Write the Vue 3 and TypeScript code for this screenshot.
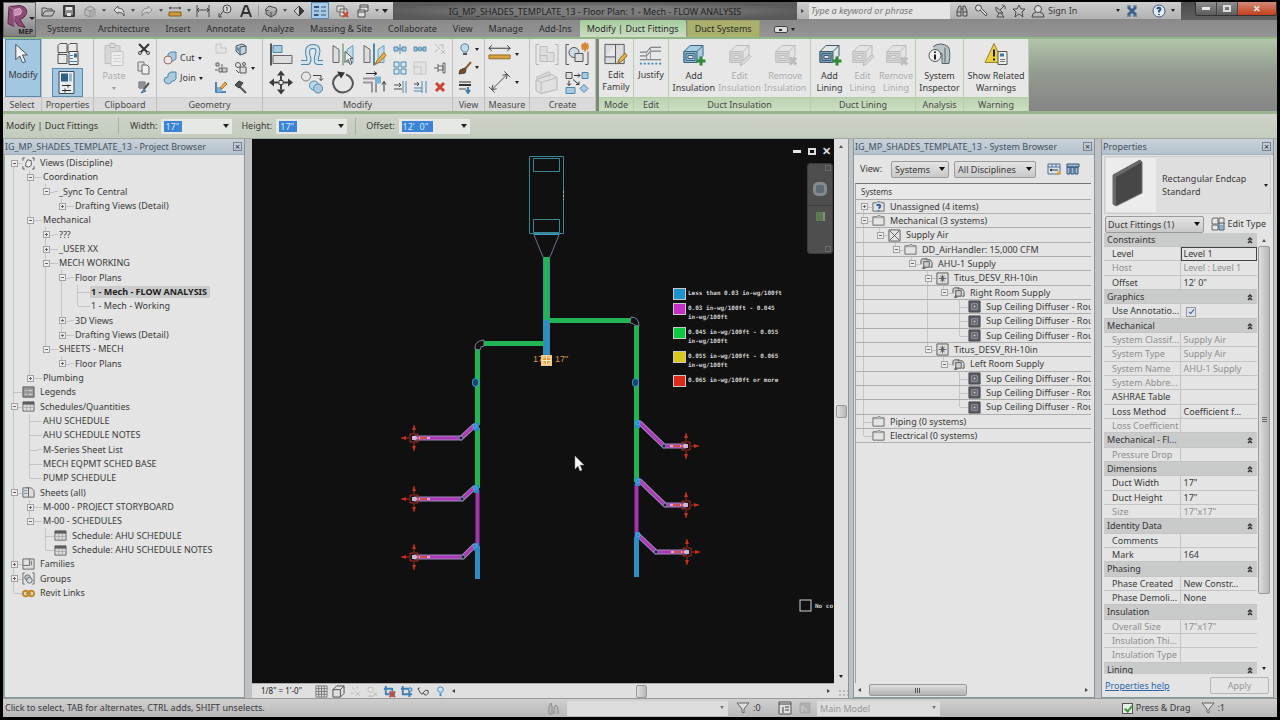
<script setup lang="ts">
import { h, ref } from 'vue'

interface TreeItem {
  depth: number
  label: string
  box?: '+' | '-'
  icon?: string
  active?: boolean
}
interface TreeRow extends TreeItem {
  guides: string[]
}
interface PropRow {
  label: string
  value?: string
  section?: boolean
  dim?: boolean
  check?: boolean
  focus?: boolean
}

const K = '#4a4a4a'
const B = '#4f86ad'
const L = '#a9cbe0'
const line = (d: string, c = K, w = 1, f = 'none') =>
  `<path d="${d}" fill="${f}" stroke="${c}" stroke-width="${w}" stroke-linejoin="round"/>`

const ductBox = (top: string, face: string, s: string, extra: string) =>
  line('M3 9L9 3H22V13L16 20H3Z', s, 1, top) + line('M3 9H16V20H3Z', s, 1, face) +
  line('M16 9L22 3', s) + line('M5 11H14V18H5Z', s, 1, face) + line('M7 13H12V16H7Z', s, 1, '#e0e0e0') + extra
const plus = line('M20 14V23M15.5 18.5H24.5', '#2f8a35', 3)
const ghostPen = line('M14 20L22 12L24 14L16 22L13 23Z', '#b9b9b9', 1, '#d8d8d8')
const ghostX = line('M17 15L23 22M23 15L17 22', '#bcbcbc', 3)

const icons: Record<string, string> = {
  logo: line('M5 3L16 2Q25 4 22 11Q20 15 16 16L21 24L14 22L10 16V23L4 20Z', '#5d2a4b', 1, '#8d4a74') +
    line('M10 6L16 5Q19 8 16 11L10 12Z', '#d9b7cb', 1, '#c58fb0') + line('M5 3L10 6V23', '#b0789a', 1),
  open: line('M1 12V4H5L6 5H11V7M1 12L4 7H14L11 12Z'),
  save: line('M2 2H12V12H2Z', '#3c3c3c', 2, '#8a8a8a') + '<path d="M4 3H10V6H4ZM5 9H9V12H5Z" fill="#e4e4e4"/>',
  sync: line('M2 5L7 2L12 5V11L7 13L2 11ZM2 5L7 7L12 5M7 7V13', '#8f8f8f', 1, '#bcbcbc') + '<circle cx="10" cy="10" r="3" fill="#aaa"/>',
  undo: line('M2 6L6 2V4Q13 4 12 12Q11 8 6 8V10Z', '#5f5f5f', 1, '#dedede'),
  redo: line('M12 6L8 2V4Q1 4 2 12Q3 8 8 8V10Z', '#909090', 1, '#cfcfcf'),
  ruler: '<path d="M1 8H13V12H1Z" fill="#d39a3c" stroke="#86601f"/>' + line('M1 4H13M3 3L1 4L3 5M11 3L13 4L11 5', '#555'),
  dim: line('M1 1V13M13 1V13M1 6H13M3 4L1 6L3 8M11 4L13 6L11 8'),
  tag: line('M1 13L6 6') + '<circle cx="9" cy="5" r="4" fill="#d6d6d6" stroke="#4a4a4a"/>' + line('M9 3V7M8 4L9 3') + line('M1 9V13H4'),
  textA: line('M2 13L6 2H8L12 13M4 9H10', '#333', 2),
  house: line('M1 6L5 2L12 4L13 7L8 8Z', K, 1, '#b4b4b4') + line('M2 7V10L7 13L12 10V7', K, 1, '#a0a0a0') + line('M7 8V13'),
  section: line('M7 2L12 7L7 12L2 7Z', K, 1, '#ccc') + '<path d="M7 2L12 7L7 12Z" fill="#333"/>',
  thin: line('M1 3H6M8 3H13M1 7H6M8 7H13M1 11H6M8 11H13', '#33577a', 1) + '<path d="M1 2H6V4H1ZM1 10H5V12H1Z" fill="#33577a"/>',
  closeHidden: line('M2 2H9V8H2ZM5 5H12V12H5Z', '#666', 1, '#ddd') + line('M8 8L13 13M13 8L8 13', '#cf4a33', 2),
  windows: line('M4 1H12V7H4Z', K, 1, '#ddd') + line('M2 6H9V13H2Z', K, 1, '#ddd') + line('M2 8H9M4 3H12', K),
  binoc: line('M2 12V7L4 2H6V12ZM8 12V2H10L12 7V12Z', K, 1, '#bbb') + line('M6 5H8M2 8H6M8 8H12', K),
  key: '<circle cx="4.500" cy="4" r="3" fill="#ddd" stroke="#4a4a4a"/>' + line('M6 6L12 12L13 10L8 5', K, 1, '#ddd'),
  dish: line('M3 3Q2 10 10 9L3 3ZM6 9L4 13H11L8 9M7 6L11 2M9 1Q13 1 12 5'),
  star: line('M7 1L9 5H13L10 8L11 13L7 10L3 13L4 8L1 5H5Z'),
  user: '<circle cx="7" cy="5" r="3.500" fill="#ddd" stroke="#4a4a4a"/>' + line('M1 13Q1 9 5 8M13 13Q13 9 9 8M1 13H13'),
  exchange: line('M3 3L11 11M11 3L3 11', '#3f5f8c', 3) + line('M2 2H6M8 2H12M2 12H6M8 12H12', '#3f5f8c', 1),
  help: '<circle cx="7" cy="7" r="6" fill="#e6ecf4" stroke="#44597e"/>' + line('M5 5Q6 3 8 4Q9 6 7 7V8.500M7 10V11', '#2d4f8e', 2),
  cursor: line('M5 2V18L9 14L12 21L15 20L12 13H17Z', '#3d4a55', 1, '#f5f5f5'),
  famTypes: line('M3 4L5 2H12V11H3ZM13 4L15 2H22V11H13ZM3 13H12V22H3ZM3 13L5 11', '#555', 1, '#e9e9e9') +
    line('M14 10H23V23H14Z', '#444', 1, '#f2f2f2') + line('M15 14H18M15 17H18M15 20H22', '#3c7fb0') + '<path d="M19 12H22V16H19Z" fill="#356f9c"/>',
  props: line('M4 1H19V23H4Z', '#3f4b55', 1, '#e9eef2') + '<path d="M6 3H13V11H6Z" fill="#2f5f86"/><path d="M14 3H17V11H14Z" fill="#93b7d2"/>' + line('M7 15H16M13 14V17M7 20H16M10 18V22', '#333'),
  paste: line('M3 3H18V21H3Z', '#c0c0c0', 1, '#d6d6d6') + line('M8 1H13V5H8Z', '#b8b8b8', 1, '#ddd') + line('M9 9H21V23H9Z', '#c4c4c4', 1, '#ececec') + line('M11 13H19M11 16H19M11 19H19', '#d0d0d0'),
  scissors: line('M2 2L10 10M12 2L4 10', '#333', 2) + '<circle cx="3" cy="11" r="1.500" fill="none" stroke="#444"/><circle cx="11" cy="11" r="1.500" fill="none" stroke="#444"/>',
  copyPage: line('M1 1H7V10H1Z', '#777', 1, '#ddd') + line('M5 4H10L12 6V13H5Z', '#666', 1, '#eee'),
  matchType: line('M2 2H8V8H2Z', '#556', 1, '#ccc') + line('M3 4H7M3 6H7', '#555') + line('M12 3L7 9', '#555', 2) + line('M7 9L4 13L9 11Z', '#3f6f94', 1, '#6ea2c5'),
  cut: line('M5 3L8 1H13V8L10 10H5Z', B, 1, L) + '<circle cx="5" cy="9" r="4" fill="#e8e8e8" stroke="#a06a6a"/>',
  join: line('M5 3L8 1H13V8L11 10H9Q8 13 5 13Q1 12 1 9Q1 6 5 6Z', B, 1, L),
  cope: line('M2 2H7V6H12V11H2Z', '#c4c4c4', 1, '#e4e4e4'),
  paint: line('M2 4L8 2L12 4V11L6 13L2 9Z', '#456', 1, '#c2d4e0') + line('M6 5L12 4M6 5V13', '#456') + '<path d="M3 5L5 6V10L3 8Z" fill="#5b8cb0"/>',
  wallJoin: line('M2 2H5V5H2ZM5 7H13V11H5ZM1 9H4M8 3V6', '#666', 1, '#ccc') + line('M8 7V11', '#555'),
  splitFace: line('M6 6H12V12H6Z', '#555', 1, '#ddd') + '<circle cx="4" cy="4" r="2.500" fill="none" stroke="#555"/><circle cx="10" cy="3" r="1.500" fill="none" stroke="#555"/>' + line('M2 9L5 12'),
  demo: line('M2 2V12H12', B, 2, 'none') + '<path d="M3 7H8V12H3Z" fill="#7fb0d0"/>' + line('M6 8L11 2L13 4L8 9Z', '#a87a2a', 1, '#e2b04c'),
  hammer: line('M5 6L12 13', '#555', 2) + line('M1 5L5 1L9 3L5 8Z', '#333', 1, '#555'),
  align: line('M2 1V23', '#555', 2) + line('M4 3H13V10H4Z', B, 1, L) + line('M4 13H23V21H4Z', '#666', 1, '#ddd'),
  offset: line('M1 20H8Q10 17 8 13Q6 4 13 4Q20 4 17 13Q15 20 18 20H23', '#4f86ad', 5) + line('M1 20H8Q10 17 8 13Q6 4 13 4Q20 4 17 13Q15 20 18 20H23', '#d3e3ec', 3),
  mirrorPick: line('M2 3L8 7V20H2Z', '#666', 1, '#ddd') + line('M12 1V23', '#3f8f55', 1) + line('M22 3L16 7V20H22Z', '#6b9fbe', 1, '#c5dcea') + line('M14 9V20L17 17L19 22L21 21L19 16H22Z', '#555', 1, '#eee'),
  mirrorDraw: line('M2 3L8 7V20H2Z', '#666', 1, '#ddd') + line('M12 1V23', B, 2) + line('M22 3L16 7V20H22Z', '#6b9fbe', 1, '#c5dcea') + line('M13 22L15 18L22 10L24 13L17 20Z', '#9a6d20', 1, '#e5b24a'),
  move: line('M12 5V19M5 12H19', '#444', 2) + '<path d="M12 0L16 5H8ZM12 24L8 19H16ZM0 12L5 8V16ZM24 12L19 16V8Z" fill="#3a3a3a"/><path d="M10 10H14V14H10Z" fill="#e8e8e8" stroke="#444"/>',
  copyBig: '<circle cx="6" cy="6" r="4.500" fill="#e6e6e6" stroke="#777"/><circle cx="14" cy="15" r="4.500" fill="#bcd8e8" stroke="#4f86ad"/><circle cx="18" cy="18" r="4.500" fill="#a9cbe0" stroke="#4f86ad"/>' + line('M13 5H21V10M19 8L21 10L23 8', '#444', 1),
  rotate: line('M8 4Q2 7 2 13Q4 22 12 22Q21 21 22 13Q21 6 15 4', '#555', 2) + '<path d="M6 1L14 2L10 8Z" fill="#333"/>',
  trim: line('M1 8H14V22M1 12H10V22', '#999', 2) + '<path d="M13 6H19V13H13Z" fill="#7fb3d3"/>' + line('M4 3H15M12 1L15 3L12 5M22 21V11M20 14L22 11L24 14', '#333'),
  split: line('M1 5H5V9H1ZM9 5H13V9H9ZM7 2V12M5 7H9', B, 1, L),
  splitGap: line('M1 5H4V9H1ZM10 5H13V9H10ZM4 7H10', B, 1, L) + '<circle cx="7" cy="7" r="2" fill="none" stroke="#4f86ad"/>',
  unpin: line('M2 2L7 7M6 3H10V7M2 10L5 7M8 8L12 12M12 8L8 12', '#bbb', 1),
  array: line('M1 1H6V6H1ZM8 1H13V6H8ZM1 8H6V13H1ZM8 8H13V13H8Z', B, 1, '#dbe7ee'),
  scale: line('M1 1H13V13H1ZM1 6H8V13', '#c6c6c6', 1, '#e2e2e2'),
  pin: line('M1 7H5M5 3V11M5 5H10V9H5M10 2V12H12V2Z', '#666', 1),
  trimOne: line('M1 5H8M6 3L8 5L6 7M1 9H9', K, 1) + line('M10 1V13M13 1V13', '#5d89a8', 1),
  trimMany: line('M1 4H6M4 2L6 4L4 6', K, 1) + line('M9 1V13M13 1V13M1 8H9M1 11H9', B, 1),
  del: line('M3 3L11 11M11 3L3 11', '#cc4234', 3),
  bulb: line('M5 10Q2 7 3 4Q6 0 10 3Q12 6 9 10Z', '#5686a8', 1, '#bcdcec') + line('M5 12H9', '#555', 2),
  brush: line('M13 1L7 8', '#8e5d3a', 2) + line('M7 7L2 9L1 13L7 12L8 9Z', '#553a2a', 1, '#7a4b31'),
  linework: line('M1 2H13', '#333', 1) + line('M1 5H13', '#333', 2) + line('M1 9H8', K, 1) + line('M10 7V12M8 10L10 13L12 10', '#3f7fae', 2),
  measure: line('M1 6H23M4 3L1 6L4 9M20 3L23 6L20 9', '#333') + '<path d="M1 13H23V17H1Z" fill="#d9a23e" stroke="#8f6a26"/>',
  dimension: line('M4 20L20 4M1 17L7 23M17 1L23 7M4 20L5 15M4 20L9 19M20 4L15 5M20 4L19 9', '#444'),
  assembly: line('M4 2H1V22H4M20 2H23V22H20', '#b5b5b5') + line('M5 4H12V10H19V19H5Z M5 13H12V19', '#bdbdbd', 1, '#dedede'),
  group: line('M4 2H1V22H4M20 22H23V9', '#555') + '<circle cx="9" cy="10" r="5" fill="#ccdce6" stroke="#555"/>' + line('M10 11H18V19H10Z', '#555', 1, '#ddd') + line('M20 0V9M16 4H24M17 1L23 7M23 1L17 7', '#d88631', 2),
  parts: line('M1 7L14 1L16 4V9', '#bcbcbc', 1, '#d8d8d8') + line('M1 9L17 4L22 7V19L6 23L1 20Z', '#b5b5b5', 1, '#e0e0e0') + line('M1 9L6 12L22 7M6 12V23', '#bcbcbc', 1),
  similar: line('M1 2H7V8H1Z', '#555', 1, '#ddd') + line('M17 2H23V8H17Z', B, 1, L) + line('M1 17H10V23H1Z', B, 1, L) + line('M19 14L23 18L19 22L15 18Z', B, 1, L) + line('M9 5H15M13 3L15 5L13 7M4 10V15M2 13L4 15L6 13M8 9L14 14M14 11V14H11', '#333'),
  editFamily: line('M1 2H21V22H1Z M1 15H12V2 M12 15V22', '#555', 1, '#d9dcdf') + line('M14 22L16 17L22 11L24 14L18 20Z', '#8a6420', 1, '#e3b250'),
  justify: line('M1 10H8L12 5H23M1 14H8L12 9H23M1 18H23', '#5c656c', 1) + line('M12 5V18M8 10V18', '#999') + line('M1 22H3M5 22H7M9 22H11M13 22H15M17 22H19M21 22H23', '#3f85bb', 2),
  addIns: ductBox('#a6cde2', '#8fbad3', '#3f6480', plus),
  editIns: ductBox('#e3e3e3', '#d9d9d9', '#bdbdbd', ghostPen),
  remIns: ductBox('#e3e3e3', '#d9d9d9', '#bdbdbd', ghostX),
  addLin: ductBox('#e4e7e9', '#6fa6c8', '#4a5a66', plus),
  inspector: line('M6 4Q14 -1 21 4Q24 8 22 21H15V11H8', '#556068', 1, '#bac3c8') + line('M18 5V20', '#556068') + '<circle cx="8" cy="13" r="6" fill="#f1f1f1" stroke="#555"/>' + line('M8 12V17M8 9V10.500', '#222', 2),
  warning: line('M10 1L19 20H1Z', '#9c8526', 1, '#ecd03f') + line('M10 7V14M10 16V18', '#222', 2) + line('M14 9H23V22H14Z', '#555', 1, '#eee') + '<path d="M16 11H20V14H16Z" fill="#3f77a5"/>' + line('M16 17H21M16 19H21', '#777'),
  views: line('M1 4V1H3M11 1H13V4M1 10V13H3M11 13H13V10', '#555') + line('M4 7L6 3L10 4V9L7 11L4 10Z', '#555', 1, '#eee'),
  legend: line('M1 1H13V12H1Z', '#555', 1, '#999') + line('M3 5H5M7 5H11M3 9H5M7 9H11', '#ddd', 1),
  sched: line('M1 2H13V12H1Z', '#666', 1, '#dcdcdc') + '<path d="M1 2H13V5H1Z" fill="#5c5c5c"/>' + line('M1 8H13M5 5V12M9 5V12', '#aaa'),
  sheets: line('M1 2H7V12H1ZM5 2H10L13 5V12H7', '#666', 1, '#ddd') + line('M2 5H6M2 8H6', '#6b8fa8', 1),
  families: line('M1 1H13V12H1ZM1 8H8V1', '#666', 1, '#ddd') + line('M10 3V8', '#666'),
  groups: line('M3 1H1V13H3M11 1H13V13H11', '#666') + '<circle cx="6" cy="6" r="3" fill="#b5c4cc" stroke="#666"/><circle cx="8" cy="9" r="3" fill="#d3dadd" stroke="#666"/>',
  links: line('M1 7Q1 4 4 4Q7 4 7 7Q7 10 4 10Q1 10 1 7M7 7Q7 4 10 4Q13 4 13 7Q13 10 10 10Q7 10 7 7M4 7H10', '#c18a28', 2),
  folder: line('M1 12V3H5L6 2H9L10 3H13V12Z', '#666', 1, '#e4e4e4') + line('M1 4H13', '#999'),
  folderQ: line('M1 12V3H5L6 2H9L10 3H13V12Z', '#666', 1, '#e4e4e4') + line('M5 6Q7 4 9 6Q9 8 7 9M7 11V12', '#27609a', 2),
  boxX: line('M1 1H13V13H1ZM2 2L12 12M12 2L2 12', '#555'),
  sys: line('M4 5H10V11H4ZM1 8V4Q1 2 3 2H8M13 6V11H11M2 12H6M4 10V13M13 6L11 3H6', '#555', 1, '#ccc'),
  fan: line('M1 1H13V13H1Z', '#555', 1, '#ddd') + line('M7 3V11M3 7H11M5 4L9 10M9 4L5 10', '#555', 1),
  diff: '<path d="M1 1H13V13H1Z" fill="#5b5c66" stroke="#45454e"/><path d="M4 4H10V10H4Z" fill="none" stroke="#9d9da8"/><path d="M6 6H8V8H6Z" fill="#ccc"/>',
  auto: line('M1 2H13V12H1ZM1 5H13M5 2V5M9 2V5', '#4b6f8e', 1, '#dde6ec') + line('M3 8H11M5 7L3 8L5 9', '#333') + '<circle cx="12" cy="11" r="2" fill="#e0a540"/>',
  columns: line('M1 2H13V5H1ZM1 5H4V12H1ZM5 5H8V12H5ZM9 5H12V12H9Z', '#33577a', 1, '#9dbdd3'),
  editType: line('M1 2L2 1H7V7H1ZM8 1H13V7H8ZM1 8H7V13H1Z', '#666', 1, '#e6e6e6') + line('M8 6H13V13H8Z', '#456', 1, '#c6d9e6') + line('M9 9H12M9 11H12', B),
  grid: line('M1 1H13V13H1ZM1 4H13M1 7H13M1 10H13M4 1V13M7 1V13M10 1V13', '#777'),
  cube: line('M1 5H9V13H1ZM1 5L5 1H13V9L9 13M9 5L13 1'),
  ghostA: line('M3 2L6 5M9 1V4M2 9H5M7 7L12 12M12 7L7 12', '#b5b5b5'),
  ghostB: '<circle cx="5" cy="5" r="3" fill="none" stroke="#bbb"/>' + line('M2 12H8M8 8L12 12M12 8L8 12', '#b5b5b5'),
  cropX: line('M3 1V10H13M1 4H10V13', '#3f7fb5', 2) + line('M7 7L13 13M13 7L7 13', '#cb4a33', 2),
  crop: line('M3 1V10H13M1 4H10V13', '#3f7fb5', 2) + '<circle cx="11" cy="5" r="2" fill="#9cc8e8" stroke="#3f7fb5"/>',
  glasses: line('M1 4L4 9Q6 11 7 8Q9 4 12 6Q13 9 10 11Q7 11 7 8M1 4L3 3', '#444', 1),
  bulbS: '<circle cx="7" cy="5" r="3" fill="#cfe6f6" stroke="#3f85c0"/>' + line('M7 9V12', '#3f85c0', 2),
  worker: line('M3 13V5L5 2L6 6V13ZM8 13V6L10 4L12 7V13', '#8a8a8a', 1, '#bbb'),
  funnel: line('M1 2H13L8 8V12L6 11V8Z', '#666', 1, '#ddd'),
  options: line('M1 1H13V13H1Z', '#555', 1, '#ddd') + line('M1 3H13M5 6V12M7 6H11M7 9H11', '#444'),
  optGhost: line('M2 2H12V12H2Z', '#a6a6a6', 1, '#b0b0b0') + line('M4 11V5L9 10', '#d0d0d0', 1)
}

const Ic = (p: { n: string; s?: number }) =>
  h('svg', {
    viewBox: (p.s ?? 14) >= 20 ? '0 0 25 24' : '0 0 14 14',
    width: p.s ?? 14,
    height: p.s ?? 14,
    'aria-hidden': 'true',
    class: 'ic',
    innerHTML: icons[p.n]
  })
Ic.props = ['n', 's']

const quick: [string, boolean][] = [
  ['open', false], ['save', false], ['sync', true], ['undo', true], ['redo', true], ['ruler', true], ['dim', false],
  ['tag', false], ['textA', false], ['|', false], ['house', true], ['section', false], ['thin', false], ['closeHidden', false], ['windows', true]
]
const tabs = ['Systems', 'Architecture', 'Insert', 'Annotate', 'Analyze', 'Massing & Site', 'Collaborate', 'View', 'Manage', 'Add-Ins']
const modifyBig = ['align', 'offset', 'mirrorPick', 'mirrorDraw', 'move', 'copyBig', 'rotate', 'trim']
const modifySmall = ['split', 'splitGap', 'unpin', 'array', 'scale', 'pin', 'trimOne', 'trimMany', 'del']
const options = [
  { id: 'width', label: 'Width:', value: '17"', sep: true },
  { id: 'height', label: 'Height:', value: '17"', sep: false },
  { id: 'offset', label: 'Offset:', value: "12'  0\"", sep: true }
]
const optionValues = ref(options.map(o => o.value))

function withGuides(items: TreeItem[]): TreeRow[] {
  return items.map((it, i) => {
    const guides: string[] = []
    for (let l = 0; l <= it.depth; l++) {
      let more = false
      for (let j = i + 1; j < items.length && items[j].depth >= l; j++) {
        if (items[j].depth === l) { more = true; break }
      }
      if (l < it.depth) guides.push(more ? 'full' : '')
      else guides.push((more ? 'full' : 'half') + ' tee' + (i === 0 ? ' first' : ''))
    }
    return { ...it, guides }
  })
}

const project = withGuides([
  { depth: 0, label: 'Views (Discipline)', box: '-', icon: 'views' },
  { depth: 1, label: 'Coordination', box: '-' },
  { depth: 2, label: '_Sync To Central', box: '-' },
  { depth: 3, label: 'Drafting Views (Detail)', box: '+' },
  { depth: 1, label: 'Mechanical', box: '-' },
  { depth: 2, label: '???', box: '+' },
  { depth: 2, label: '_USER XX', box: '+' },
  { depth: 2, label: 'MECH WORKING', box: '-' },
  { depth: 3, label: 'Floor Plans', box: '-' },
  { depth: 4, label: '1 - Mech - FLOW ANALYSIS', active: true },
  { depth: 4, label: '1 - Mech - Working' },
  { depth: 3, label: '3D Views', box: '+' },
  { depth: 3, label: 'Drafting Views (Detail)', box: '+' },
  { depth: 2, label: 'SHEETS - MECH', box: '-' },
  { depth: 3, label: 'Floor Plans', box: '+' },
  { depth: 1, label: 'Plumbing', box: '+' },
  { depth: 0, label: 'Legends', icon: 'legend' },
  { depth: 0, label: 'Schedules/Quantities', box: '-', icon: 'sched' },
  { depth: 1, label: 'AHU SCHEDULE' },
  { depth: 1, label: 'AHU SCHEDULE NOTES' },
  { depth: 1, label: 'M-Series Sheet List' },
  { depth: 1, label: 'MECH EQPMT SCHED BASE' },
  { depth: 1, label: 'PUMP SCHEDULE' },
  { depth: 0, label: 'Sheets (all)', box: '-', icon: 'sheets' },
  { depth: 1, label: 'M-000 - PROJECT STORYBOARD', box: '+' },
  { depth: 1, label: 'M-00 - SCHEDULES', box: '-' },
  { depth: 2, label: 'Schedule: AHU SCHEDULE', icon: 'sched' },
  { depth: 2, label: 'Schedule: AHU SCHEDULE NOTES', icon: 'sched' },
  { depth: 0, label: 'Families', box: '+', icon: 'families' },
  { depth: 0, label: 'Groups', box: '+', icon: 'groups' },
  { depth: 0, label: 'Revit Links', icon: 'links' }
])

const diffuser: TreeItem = { depth: 6, label: 'Sup Ceiling Diffuser - Rou', icon: 'diff' }
const system = withGuides([
  { depth: 0, label: 'Unassigned (4 items)', box: '+', icon: 'folderQ' },
  { depth: 0, label: 'Mechanical (3 systems)', box: '-', icon: 'folder' },
  { depth: 1, label: 'Supply Air', box: '-', icon: 'boxX' },
  { depth: 2, label: 'DD_AirHandler: 15,000 CFM', box: '-', icon: 'folder' },
  { depth: 3, label: 'AHU-1 Supply', box: '-', icon: 'sys' },
  { depth: 4, label: 'Titus_DESV_RH-10in', box: '-', icon: 'fan' },
  { depth: 5, label: 'Right Room Supply', box: '-', icon: 'sys' },
  diffuser, diffuser, diffuser,
  { depth: 4, label: 'Titus_DESV_RH-10in', box: '-', icon: 'fan' },
  { depth: 5, label: 'Left Room Supply', box: '-', icon: 'sys' },
  diffuser, diffuser, diffuser,
  { depth: 0, label: 'Piping (0 systems)', icon: 'folder' },
  { depth: 0, label: 'Electrical (0 systems)', icon: 'folder' }
])

const props: PropRow[] = [
  { label: 'Constraints', section: true },
  { label: 'Level', value: 'Level 1', focus: true },
  { label: 'Host', value: 'Level : Level 1', dim: true },
  { label: 'Offset', value: "12'  0\"" },
  { label: 'Graphics', section: true },
  { label: 'Use Annotatio...', check: true },
  { label: 'Mechanical', section: true },
  { label: 'System Classif...', value: 'Supply Air', dim: true },
  { label: 'System Type', value: 'Supply Air', dim: true },
  { label: 'System Name', value: 'AHU-1 Supply', dim: true },
  { label: 'System Abbre...', dim: true },
  { label: 'ASHRAE Table' },
  { label: 'Loss Method', value: 'Coefficient f...' },
  { label: 'Loss Coefficient', dim: true },
  { label: 'Mechanical - Fl...', section: true },
  { label: 'Pressure Drop', dim: true },
  { label: 'Dimensions', section: true },
  { label: 'Duct Width', value: '17"' },
  { label: 'Duct Height', value: '17"' },
  { label: 'Size', value: '17"x17"', dim: true },
  { label: 'Identity Data', section: true },
  { label: 'Comments' },
  { label: 'Mark', value: '164' },
  { label: 'Phasing', section: true },
  { label: 'Phase Created', value: 'New Constr...' },
  { label: 'Phase Demoli...', value: 'None' },
  { label: 'Insulation', section: true },
  { label: 'Overall Size', value: '17"x17"', dim: true },
  { label: 'Insulation Thi...', dim: true },
  { label: 'Insulation Type', dim: true },
  { label: 'Lining', section: true }
]

const legend = [
  { y: 288, c: '#1c93cf', t: ['Less than 0.03 in-wg/100ft'] },
  { y: 303, c: '#c42fc4', t: ['0.03 in-wg/100ft - 0.045', 'in-wg/100ft'] },
  { y: 327, c: '#10c840', t: ['0.045 in-wg/100ft - 0.055', 'in-wg/100ft'] },
  { y: 351, c: '#d8c81c', t: ['0.055 in-wg/100ft - 0.065', 'in-wg/100ft'] },
  { y: 375, c: '#dc2a18', t: ['0.065 in-wg/100ft or more'] }
]
const branches = [
  { d: 'M475 425L461 438H414', x: 414, y: 438, s: 1, tx: 476, ty: 426, ex: 461 },
  { d: 'M475 487L462 499H414', x: 414, y: 499, s: 1, tx: 476, ty: 488, ex: 462 },
  { d: 'M475 545L463 557H414', x: 414, y: 557, s: 1, tx: 476, ty: 546, ex: 463 },
  { d: 'M639 422L664 446H686', x: 686, y: 446, s: -1, tx: 637, ty: 423, ex: 664 },
  { d: 'M639 480L665 505H686', x: 686, y: 505, s: -1, tx: 637, ty: 481, ex: 665 },
  { d: 'M638 535L656 552H687', x: 687, y: 552, s: -1, tx: 637, ty: 535, ex: 656 }
]
const viewIcons = ['grid', 'cube', 'ghostA', 'ghostB', 'cropX', 'crop', 'glasses', 'bulbS']
const pressDrag = ref(true)
</script>

<template>
  <div class="window">
    <header class="top">
      <button class="app" aria-label="Application menu"><Ic n="logo" :s="25" /><i class="dn"></i><span>MEP</span></button>
      <div class="title">
        <div class="quick">
          <template v-for="[n, arrow] in quick" :key="n">
            <i v-if="n === '|'" class="qsep"></i>
            <button v-else :class="{ on: n === 'thin' }" :aria-label="n"><Ic :n="n" /></button>
            <i v-if="arrow" class="dn small"></i>
          </template>
          <i class="dn last"></i>
        </div>
        <h1>IG_MP_SHADES_TEMPLATE_13 - Floor Plan: 1 - Mech - FLOW ANALYSIS</h1>
        <div class="info">
          <i class="rt"></i>
          <input type="text" placeholder="Type a keyword or phrase" aria-label="Search" />
          <button v-for="n in ['binoc', 'key', 'dish', 'star']" :key="n" :aria-label="n"><Ic :n="n" /></button>
          <button class="sign"><Ic n="user" /> Sign In</button>
          <i class="dn small"></i>
          <button aria-label="Exchange apps"><Ic n="exchange" /></button>
          <button aria-label="Help" class="help"><Ic n="help" /></button>
          <i class="dn small"></i>
        </div>
        <div class="wins">
          <button aria-label="Minimize"><i class="min"></i></button>
          <button aria-label="Restore"><i class="max"></i></button>
          <button aria-label="Close" class="x">✕</button>
        </div>
      </div>
      <nav class="tabs">
        <a v-for="t in tabs" :key="t" href="#">{{ t }}</a>
        <a href="#" class="active">Modify | Duct Fittings</a>
        <a href="#" class="ctx">Duct Systems</a>
        <button class="toggle" aria-label="Minimize ribbon"><i></i></button><i class="dn small"></i>
      </nav>
    </header>

    <div class="ribbon">
      <section class="w-select"><div class="body tight"><button class="tall sel"><Ic n="cursor" :s="24" /><span>Modify</span></button></div><h2>Select</h2></section>
      <section class="w-props"><div class="body col"><button aria-label="Type properties"><Ic n="famTypes" :s="25" /></button><button class="sel wide" aria-label="Properties"><Ic n="props" :s="25" /></button></div><h2>Properties</h2></section>
      <section class="w-clip">
        <div class="body"><button class="tall off"><Ic n="paste" :s="25" /><span>Paste</span><i class="dn small"></i></button>
          <div class="g3 one"><button v-for="n in ['scissors', 'copyPage', 'matchType']" :key="n" :aria-label="n"><Ic :n="n" /></button></div></div>
        <h2>Clipboard</h2>
      </section>
      <section class="w-geo">
        <div class="body">
          <div class="rows"><button><Ic n="cut" /> Cut <i class="dn small"></i></button><button><Ic n="join" /> Join <i class="dn small"></i></button></div>
          <div class="g3 two"><button v-for="n in ['cope', 'paint', 'wallJoin', 'splitFace', 'demo', 'hammer']" :key="n" :aria-label="n"><Ic :n="n" /></button></div>
          <i class="dn small"></i>
        </div>
        <h2>Geometry</h2>
      </section>
      <section class="w-mod">
        <div class="body">
          <div class="g2 four"><button v-for="n in modifyBig" :key="n" :aria-label="n"><Ic :n="n" :s="25" /></button></div>
          <div class="g3 three"><button v-for="n in modifySmall" :key="n" :aria-label="n"><Ic :n="n" /></button></div>
        </div>
        <h2>Modify</h2>
      </section>
      <section class="w-view"><div class="body"><div class="g3 one"><button v-for="n in ['bulb', 'brush', 'linework']" :key="n" :aria-label="n"><Ic :n="n" /><i v-if="n !== 'linework'" class="dn small"></i></button></div></div><h2>View</h2></section>
      <section class="w-meas"><div class="body"><div class="g2 single"><button v-for="n in ['measure', 'dimension']" :key="n" :aria-label="n"><Ic :n="n" :s="24" /><i class="dn small"></i></button></div></div><h2>Measure</h2></section>
      <section class="w-create"><div class="body"><div class="g2 pair"><button v-for="n in ['assembly', 'group', 'parts', 'similar']" :key="n" :aria-label="n"><Ic :n="n" :s="25" /></button></div></div><h2>Create</h2></section>
      <section class="w-mode green edge"><div class="body"><button class="tall"><Ic n="editFamily" :s="24" /><span>Edit<br />Family</span></button></div><h2>Mode</h2></section>
      <section class="w-edit green"><div class="body"><button class="tall"><Ic n="justify" :s="24" /><span>Justify</span></button></div><h2>Edit</h2></section>
      <section class="w-ins green">
        <div class="body">
          <button class="tall"><Ic n="addIns" :s="25" /><span>Add<br />Insulation</span></button>
          <button class="tall off" disabled><Ic n="editIns" :s="25" /><span>Edit<br />Insulation</span></button>
          <button class="tall off" disabled><Ic n="remIns" :s="25" /><span>Remove<br />Insulation</span></button>
        </div>
        <h2>Duct Insulation</h2>
      </section>
      <section class="w-lin green">
        <div class="body">
          <button class="tall"><Ic n="addLin" :s="25" /><span>Add<br />Lining</span></button>
          <button class="tall off" disabled><Ic n="editIns" :s="25" /><span>Edit<br />Lining</span></button>
          <button class="tall off" disabled><Ic n="remIns" :s="25" /><span>Remove<br />Lining</span></button>
        </div>
        <h2>Duct Lining</h2>
      </section>
      <section class="w-ana green"><div class="body"><button class="tall"><Ic n="inspector" :s="25" /><span>System<br />Inspector</span></button></div><h2>Analysis</h2></section>
      <section class="w-warn green"><div class="body"><button class="tall"><Ic n="warning" :s="25" /><span>Show Related<br />Warnings</span></button></div><h2>Warning</h2></section>
    </div>

    <div class="opts">
      <span class="ctxname">Modify | Duct Fittings</span>
      <template v-for="(o, i) in options" :key="o.id">
        <i v-if="o.sep" class="osep"></i>
        <label :for="o.id">{{ o.label }}</label>
        <div class="combo"><input :id="o.id" v-model="optionValues[i]" type="text" :class="{ long: o.id === 'offset' }" /><button :aria-label="'Choose ' + o.id"><i class="dn"></i></button></div>
      </template>
    </div>

    <main class="work">
      <aside class="dock">
        <div class="cap"><span>IG_MP_SHADES_TEMPLATE_13 - Project Browser</span><button aria-label="Close project browser">×</button></div>
        <ul class="tree project">
          <li v-for="(r, i) in project" :key="i">
            <span v-for="(g, k) in r.guides" :key="k" class="cell" :class="g"><button v-if="r.box && k === r.depth" class="box" :aria-label="(r.box === '+' ? 'Expand ' : 'Collapse ') + r.label" :class="{ plus: r.box === '+' }"></button></span>
            <span v-if="r.icon" class="ticon"><Ic :n="r.icon" :s="13" /></span><span v-else class="stub"></span>
            <span class="lbl" :class="{ active: r.active }">{{ r.label }}</span>
          </li>
        </ul>
      </aside>

      <section class="view">
        <div class="canvas">
          <svg class="plan" viewBox="252 139 582 544" preserveAspectRatio="xMidYMid slice" role="img" aria-label="Duct flow analysis plan">
            <g fill="none" stroke="#3a8793" stroke-width="1">
              <path d="M529.5 156.500H563.500V233.500H529.500Z M533.500 158.500H559.500V171.500H533.500Z M533.500 219.500H559.500V232.500H533.500Z" />
              <path d="M533.500 234.500H559.500" stroke="#35a0c8" />
              <path d="M534 235L543 257M559 235L550 257" stroke="#67778c" />
              <path d="M563.500 191V200" stroke="#a5b5a5" stroke-dasharray="2 2" />
            </g>
            <g fill="none" stroke="#21b455" stroke-width="5">
              <path d="M546.500 257V320M549 320.500H631M543 343.500H484M477.500 349V425M636.500 326V425M477.500 428V488M636.500 425V482" />
            </g>
            <g fill="none" stroke="#2c8fc4" stroke-width="5">
              <path d="M546.500 320V357M477.500 546V579M636.500 537V577" />
            </g>
            <path d="M477.500 490V546M636.500 484V537" fill="none" stroke="#a535ae" stroke-width="4" />
            <g fill="#101010" stroke="#7283a0" stroke-width="1">
              <path d="M475 349Q474 341 484 340V346Q480 346 480 350Z" />
              <path d="M631 317Q639 317 639 326L634 325Q634 323 630 323Z" />
            </g>
            <g fill="#14466b" stroke="#3aa1e0" stroke-width="1">
              <rect x="472.500" y="378.500" width="6" height="8" rx="3" /><rect x="632.500" y="378.500" width="6" height="8" rx="3" />
            </g>
            <path d="M543.500 257V358M549.500 257V358" stroke="#3d8ca0" fill="none" />
            <g v-for="b in branches" :key="b.d" fill="none">
              <path :d="b.d" stroke="#9c8ab8" stroke-width="5" />
              <path :d="b.d" stroke="#ad37b8" stroke-width="3" />
              <rect :x="b.tx - 2" :y="b.ty - 3" width="5" height="8" fill="#2689cb" />
              <circle :cx="b.tx - b.s * 1" :cy="b.ty" r="2" stroke="#5da8de" />
              <circle :cx="b.ex" :cy="b.y" r="2" fill="#1d2030" stroke="#7c8cb8" />
              <path :d="`M${b.x} ${b.y}h${b.s * 16}`" stroke="#dfa4cf" stroke-width="2" />
              <path :d="`M${b.x + b.s * 6} ${b.y}h${b.s * 7}`" stroke="#d24c44" stroke-width="2" />
              <path :d="`M${b.x - 4} ${b.y - 4}h8v8h-8Z M${b.x} ${b.y - 13}v8M${b.x} ${b.y + 5}v8M${b.x - b.s * 5} ${b.y}h${-b.s * 8}`" stroke="#b02a1e" />
              <path :d="`M${b.x} ${b.y - 13}l-2 5h4ZM${b.x} ${b.y + 13}l-2 -5h4ZM${b.x - b.s * 13} ${b.y}l${b.s * 5} -2v4Z`" fill="#c8301f" />
              <rect :x="b.x - 2" :y="b.y - 2" width="4" height="4" fill="#cdb6d8" />
            </g>
            <g>
              <text x="533" y="362" class="dimtext">17"</text>
              <text x="555" y="362" class="dimtext">17"</text>
              <rect x="541" y="355" width="11" height="11" fill="#f1c98a" />
              <path d="M546.500 356L551 360L546.500 365L542 360Z" fill="#e49a3a" /><path d="M542 360.500H551M546.500 356V365" stroke="#fff0d0" />
            </g>
            <g v-for="k in legend" :key="k.c">
              <rect x="673.500" :y="k.y + 0.5" width="12" height="11" :fill="k.c" stroke="#c8c8c8" />
              <text v-for="(t, n) in k.t" :key="n" x="688" :y="k.y + 7 + n * 9" class="key">{{ t }}</text>
            </g>
            <rect x="800" y="600" width="11" height="11" fill="none" stroke="#d2d2d2" />
            <text x="815" y="608" class="key">No co</text>
            <path d="M575 456V469L578 466L580 471L582 470L580 465H584Z" fill="#f4f4f4" stroke="#999" stroke-width="0.500" />
          </svg>
          <div class="mdi">
            <button aria-label="Minimize view"><i class="min"></i></button><button aria-label="Restore view"><i class="max"></i></button><button aria-label="Close view">✕</button>
          </div>
          <div class="navbar">
            <button aria-label="Close navigation bar" class="tiny"></button>
            <button aria-label="Navigation wheel" class="wheel"><i></i></button>
            <button aria-label="Zoom" class="zoom"><i></i></button>
            <button aria-label="Customize" class="tiny end"></button>
          </div>
        </div>
        <div class="vscroll"><i class="up"></i><span class="sp near"></span><span class="thumb sq"></span><span class="sp"></span><i class="dn small"></i></div>
        <div class="vbar">
          <span class="scale">1/8" = 1'-0"</span>
          <button v-for="n in viewIcons" :key="n" :aria-label="n"><Ic :n="n" :s="13" /></button>
          <i class="lt"></i><span class="sp"></span><span class="thumb sq"></span><span class="sp"></span><i class="rt"></i>
        </div>
        <div class="grip"></div>
      </section>

      <aside class="dock">
        <div class="cap"><span>IG_MP_SHADES_TEMPLATE_13 - System Browser</span><button aria-label="Close system browser">×</button></div>
        <div class="filter">
          <label for="sysview">View:</label>
          <span class="pick a"><select id="sysview"><option>Systems</option></select></span>
          <span class="pick b"><select aria-label="Discipline"><option>All Disciplines</option></select></span>
          <button aria-label="Autofit columns"><Ic n="auto" /></button><button aria-label="Column settings"><Ic n="columns" /></button>
        </div>
        <div class="syslist">
          <div class="colhead">Systems</div>
          <ul class="tree sys">
            <li v-for="(r, i) in system" :key="i">
              <span v-for="(g, k) in r.guides" :key="k" class="cell" :class="g"><button v-if="r.box && k === r.depth" class="box" :aria-label="(r.box === '+' ? 'Expand ' : 'Collapse ') + r.label" :class="{ plus: r.box === '+' }"></button></span>
              <span class="ticon"><Ic :n="r.icon!" :s="13" /></span>
              <span class="lbl">{{ r.label }}</span>
            </li>
          </ul>
        </div>
        <div class="hscroll"><i class="lt"></i><span class="thumb"><b></b></span><span class="sp"></span><i class="rt"></i></div>
      </aside>

      <aside class="dock propdock">
        <div class="cap"><span>Properties</span><button aria-label="Close properties">×</button></div>
        <button class="type">
          <span class="thumbnail"><svg viewBox="0 0 50 50" width="50" height="50" aria-hidden="true"><path d="M7 16L34 1L36 3V34L10 47L7 45Z" fill="#474747" stroke="#6e6e6e" /><path d="M7 16L34 1L36 3L10 18V47L7 45Z" fill="#6a6a6a" /></svg></span>
          <span class="tname">Rectangular Endcap<br />Standard</span><i class="dn small"></i>
        </button>
        <div class="cat"><span class="pick"><select aria-label="Category"><option>Duct Fittings (1)</option></select></span><button><Ic n="editType" /> Edit Type</button></div>
        <div class="proparea">
          <div class="tablewrap">
            <table>
              <colgroup><col /><col /></colgroup>
              <tbody>
                <tr v-for="(p, i) in props" :key="i" :class="{ sec: p.section, dim: p.dim }">
                  <th v-if="p.section" colspan="2" scope="colgroup"><div class="sect"><span>{{ p.label }}</span><button :aria-label="'Collapse ' + p.label"><svg viewBox="0 0 8 8" width="8" height="8" aria-hidden="true"><path d="M2 4L4 2L6 4M2 7L4 5L6 7" fill="none" stroke="#333" stroke-width="1.500" /></svg></button></div></th>
                  <template v-else>
                    <th scope="row">{{ p.label }}</th>
                    <td :class="{ focus: p.focus }"><input v-if="p.check" type="checkbox" checked :aria-label="p.label" /><template v-else>{{ p.value }}</template></td>
                  </template>
                </tr>
              </tbody>
            </table>
          </div>
          <div class="pscroll"><i class="up"></i><span class="thumb"><b></b></span><span class="sp"></span><i class="dn small"></i></div>
        </div>
        <div class="foot"><a href="#">Properties help</a><button disabled>Apply</button></div>
      </aside>
    </main>

    <footer class="status">
      <span class="hint">Click to select, TAB for alternates, CTRL adds, SHIFT unselects.</span>
      <Ic n="worker" />
      <span class="pick ws"><select aria-label="Active workset"><option></option></select></span>
      <Ic n="funnel" class="gap" /><span class="zero">:0</span>
      <Ic n="options" /><Ic n="optGhost" />
      <span class="pick mm"><select aria-label="Active design option"><option>Main Model</option></select></span>
      <span class="sp"></span>
      <label class="pd"><input v-model="pressDrag" type="checkbox" /> Press &amp; Drag</label>
      <Ic n="funnel" /><span class="one">:1</span>
    </footer>
  </div>
</template>

<style>
body { margin: 0; background: #000; }
</style>

<style scoped>
* { box-sizing: border-box; }
.window { height: 100vh; padding: 2px 3px 3px; background: #000; display: flex; flex-direction: column; font: 9px/12px "Noto Sans", "Open Sans", sans-serif; color: #3a3a3a; overflow: hidden; }
button { font: inherit; color: inherit; background: none; border: 0; padding: 0; margin: 0; display: flex; align-items: center; justify-content: center; }
input, select { font: inherit; color: inherit; margin: 0; }
h1, h2 { font: inherit; margin: 0; }
a { color: inherit; text-decoration: none; }
.ic { display: block; flex: none; }
.sp { flex: 1; }
.dn, .up, .lt, .rt { flex: none; display: inline-block; width: 0; height: 0; border: 3px solid transparent; }
.dn { border-top: 4px solid #222; border-bottom: 0; }
.dn.small { border-width: 3px 2px 0; }
.up { border-bottom: 3px solid #555; border-top: 0; border-left-width: 2px; border-right-width: 2px; }
.lt { border-right: 3px solid #444; border-left: 0; border-top-width: 2px; border-bottom-width: 2px; }
.rt { border-left: 3px solid #444; border-right: 0; border-top-width: 2px; border-bottom-width: 2px; }

.top { display: grid; grid-template: 18px 17px / 33px 1fr; flex: none; background: #8f8f8f; }
.app { grid-row: 1 / 3; position: relative; background: linear-gradient(#c6c6c6, #7f7f7f); border: 1px solid #666; align-items: flex-start; justify-content: flex-start; gap: 1px; }
.app .dn { margin-top: 14px; border-width: 3px 3px 0; margin-left: -1px; }
.app span { position: absolute; right: 2px; bottom: 0; font-size: 7px; font-weight: bold; line-height: 9px; color: #222; }
.title { display: flex; background: linear-gradient(#4c4c4c, #606060); min-width: 0; }
.quick { display: flex; align-items: center; background: linear-gradient(#d2d2d2, #b4b4b4); width: 357px; padding: 0 5px 0 3px; justify-content: space-between; flex: none; border-bottom: 1px solid #888; }
.quick button { width: 18px; height: 17px; }
.quick .on { background: #a8cae4; border: 1px solid #5889b0; }
.qsep { width: 1px; height: 12px; background: #999; }
.quick .small { border-top-color: #555; }
h1 { flex: 1; text-align: center; line-height: 19px; color: #242424; white-space: nowrap; overflow: hidden; background: radial-gradient(ellipse at center, #7c7c7c 30%, #5a5a5a 75%); }
.info { display: flex; align-items: center; background: linear-gradient(#cdcdcd, #b2b2b2); width: 384px; padding: 0 6px 0 4px; gap: 5px; flex: none; border-bottom: 1px solid #888; }
.info input { width: 141px; height: 16px; border: 0; background: #e4e4e4; padding: 0 2px; font-style: italic; }
.info input::placeholder { color: #777; }
.info .sign { gap: 3px; flex: 1; justify-content: flex-start; white-space: nowrap; }
.info .help { margin-left: 8px; }
.wins { display: flex; margin-left: 14px; height: 14px; width: 82px; border: 1px solid #333; border-top: 0; border-radius: 0 0 3px 3px; overflow: hidden; flex: none; }
.wins button { width: 21px; background: linear-gradient(#8e8e8e, #5c5c5c); border-right: 1px solid #444; }
.wins .x { flex: 1; background: linear-gradient(#d28a78, #c2401c); color: #eee; border: 0; font-weight: bold; }
.min { width: 8px; height: 3px; background: #e6e6e6; }
.max { width: 8px; height: 7px; border: 2px solid #ddd; }
.tabs { display: flex; align-items: stretch; padding-left: 3px; background: linear-gradient(#8a8a8a, #959595); line-height: 18px; }
.tabs a { padding: 0 8px; white-space: nowrap; color: #2c2c2c; }
.tabs .active { background: linear-gradient(#a4cc9c, #ccdcc4); border-radius: 2px 2px 0 0; padding: 0 7px; }
.tabs .ctx { background: #a9b06b; padding: 0 7px; margin-left: 1px; border: 1px solid #9da462; border-bottom: 0; line-height: 16px; }
.toggle { width: 14px; height: 7px; border: 1px solid #444; border-radius: 2px; margin: 6px 3px 0 14px; background: #ddd; }
.toggle i { width: 3px; height: 2px; background: #333; }
.tabs > .dn { margin-top: 8px; }

.ribbon { flex: none; height: 77px; display: flex; background: linear-gradient(#b2c5aa, #949b91 45%, #858585); border-top: 2px solid #93b888; border-bottom: 3px solid #99b48f; }
.ribbon section { display: flex; flex-direction: column; background: #e6e7e6; border-right: 1px solid #bdbebd; flex: none; white-space: nowrap; }
.ribbon h2 { height: 14px; line-height: 13px; text-align: center; background: #d9dad9; border-top: 1px solid #cfcfcf; color: #4b4b4b; }
.ribbon .green h2 { background: linear-gradient(#bcd3b1, #cbdec2); border-color: #b4cca8; }
.ribbon .green { border-color: #b6cfad; }
.ribbon .edge { border-left: 3px solid #7b8a78; }
.body { flex: 1; display: flex; align-items: stretch; justify-content: center; padding: 1px 2px; min-height: 0; }
.body.tight { padding: 0 0 0 2px; }
.body.col { flex-direction: column; align-items: center; justify-content: space-between; padding: 0; }
.body.col button { width: 31px; height: 29px; }
.tall { flex-direction: column; justify-content: flex-start; padding-top: 2px; line-height: 12px; gap: 3px; flex: 1; }
.tall .dn { margin-top: 2px; }
.sel { background: #a3c6e1; border: 1px solid #5c8bb1; }
.off { color: #adadad; }
.off .dn { border-top-color: #999; }
.w-select { width: 39px; } .w-props { width: 52px; } .w-clip { width: 63px; } .w-geo { width: 106px; } .w-mod { width: 190px; }
.w-view { width: 32px; } .w-meas { width: 45px; } .w-create { width: 66px; } .w-mode { width: 38px; } .w-edit { width: 35px; }
.w-ins { width: 142px; } .w-lin { width: 105px; } .w-ana { width: 48px; } .w-warn { width: 65px; }
.g3, .g2 { display: grid; }
.g3 { grid-template-rows: repeat(3, 1fr); }
.g2 { grid-template-rows: repeat(2, 1fr); }
.g3.one { grid-template-columns: 20px; } .g3.two { grid-template-columns: 20px 20px; } .g3.three { grid-template-columns: repeat(3, 20px); }
.four { grid-template-columns: repeat(4, 31px); } .pair { grid-template-columns: 30px 30px; } .single { grid-template-columns: 38px; }
.w-geo .body { justify-content: flex-start; align-items: center; padding-left: 6px; }
.w-geo .g3 { height: 100%; }
.rows { display: flex; flex-direction: column; gap: 6px; width: 48px; }
.rows button { justify-content: flex-start; gap: 3px; }
.w-view button, .w-meas button { gap: 3px; justify-content: flex-start; }
.w-view .one { grid-template-columns: 24px; }

.opts { flex: none; height: 25px; display: flex; align-items: center; background: linear-gradient(#cfd5c8, #c3cbbd); padding-left: 3px; border-bottom: 1px solid #a3a9a0; white-space: nowrap; }
.ctxname { width: 98px; }
.osep { width: 1px; height: 16px; background: #a8aea3; margin: 0 11px 0 14px; }
.combo + .osep { margin: 0 10px 0 8px; }
.combo + label { margin-left: 9px; }
.combo { display: flex; align-items: center; margin-left: 4px; width: 71px; height: 15px; background: #e6e8e6; padding-left: 3px; }
.combo input { width: 18px; height: 11px; padding: 0 1px; border: 0; background: #3a83d6; color: #d8e8f8; line-height: 11px; outline: 0; }
.combo input.long { width: 31px; }
.combo button { margin-left: auto; width: 12px; height: 13px; }

.work { flex: 1; min-height: 0; display: grid; grid-template-columns: 242px minmax(0, 1fr) 242px 173px; column-gap: 6px; padding-right: 3px; background: #bfc1c2; }
.dock { display: flex; flex-direction: column; min-width: 0; min-height: 0; background: #e3e4e3; border: 1px solid #8a959c; border-top: 0; }
.cap { flex: none; height: 16px; display: flex; align-items: center; justify-content: space-between; background: linear-gradient(#c9d2d9, #b4c1cc); color: #45525d; padding: 0 2px 0 1px; white-space: nowrap; border-bottom: 1px solid #a5b0b8; }
.cap button { width: 9px; height: 9px; border: 1px solid #77828c; font-size: 9px; line-height: 7px; color: #333; }
.tree { list-style: none; margin: 0; padding: 0; white-space: nowrap; overflow: hidden; }
.tree li { display: flex; align-items: center; height: 14px; }
.tree li:nth-child(3n) { height: 15px; }
.project { flex: 1; margin: 0 1px 0 0; border-left: 1px solid #9aa3a9; padding: 1px 0 0 1px; }
.cell { position: relative; width: 16px; align-self: stretch; flex: none; display: flex; align-items: center; justify-content: center; }
.cell.full::before, .cell.half::before { content: ""; position: absolute; left: 7px; top: 0; width: 1px; height: 100%; background: #c3c5c6; }
.cell.half::before { height: 50%; }
.cell.first::before { top: 50%; height: 50%; }
.cell.tee::after { content: ""; position: absolute; left: 8px; right: 0; top: 50%; height: 1px; background: #c3c5c6; }
.box { position: relative; z-index: 1; width: 7px; height: 7px; border: 1px solid #a2a2a2; background: linear-gradient(#666, #666) center / 3px 1px no-repeat #eee; }
.box.plus { background: linear-gradient(#666, #666) center / 3px 1px no-repeat, linear-gradient(#666, #666) center / 1px 3px no-repeat #eee; }
.stub { width: 4px; height: 1px; background: #c3c5c6; }
.ticon { width: 17px; flex: none; }
.lbl { padding: 0 1px; line-height: 12px; }
.lbl.active { background: #cbcccb; font-weight: bold; color: #222; padding-right: 3px; }

.view { min-width: 0; min-height: 0; margin: 0 -2px 0 1px; display: grid; grid-template: minmax(0, 1fr) 15px / minmax(0, 1fr) 14px; background: #dfe0df; border-right: 1px solid #8a959c; }
.canvas { position: relative; background: #101010; overflow: hidden; min-height: 0; }
.plan { display: block; width: 100%; height: 100%; }
.key { font: bold 6px "DejaVu Sans Mono", monospace; fill: #d0d0d0; }
.dimtext { font: 9px "Liberation Sans", sans-serif; fill: #d89a45; }
.mdi { position: absolute; right: 2px; top: 6px; display: flex; gap: 4px; color: #ddd; font-weight: bold; }
.mdi button { width: 11px; height: 12px; font-size: 11px; }
.navbar { position: absolute; right: 1px; top: 24px; width: 26px; height: 91px; border-radius: 3px; background: #4e4e4e; border: 1px solid #3b3b3b; display: flex; flex-direction: column; align-items: center; }
.tiny { width: 6px; height: 6px; border: 1px solid #6a6a6a; align-self: flex-end; margin: 1px; flex: none; }
.wheel, .zoom { flex: 1; width: 100%; }
.wheel { border-bottom: 1px solid #3e3e3e; }
.wheel i { width: 14px; height: 14px; border-radius: 5px; border: 3px solid #858a8e; background: #5e6a75; }
.zoom { align-items: flex-start; padding-top: 6px; }
.zoom i { width: 9px; height: 9px; background: #5d7a50; border-right: 2px solid #888; }
.vscroll { display: flex; flex-direction: column; align-items: center; padding: 6px 0 5px; }
.thumb { flex: none; background: linear-gradient(90deg, #dedede, #b6b6b6); border: 1px solid #999; border-radius: 2px; display: flex; align-items: center; justify-content: center; }
.sq { width: 11px; height: 13px; }
.vbar { display: flex; align-items: center; padding: 0 4px 0 9px; white-space: nowrap; border-top: 1px solid #aaa; }
.vbar .scale { width: 52px; font-size: 8px; color: #222; }
.vbar button { width: 17px; }
.vbar .lt { margin-left: 3px; }
.grip { background: radial-gradient(#bbb 1px, transparent 1px) 4px 4px / 4px 4px; margin: 6px 0 2px 4px; }

.filter { flex: none; height: 28px; display: flex; align-items: center; padding-left: 6px; gap: 5px; }
.pick { position: relative; display: inline-flex; }
.pick select { appearance: none; width: 100%; height: 17px; padding: 0 3px; border: 1px solid #9a9a9a; border-radius: 2px; background: linear-gradient(#e4e4e4, #c9c9c9); line-height: 15px; outline: 0; }
.pick::after { content: ""; position: absolute; right: 4px; top: 50%; margin-top: -2px; border: 3px solid transparent; border-top: 4px solid #111; border-bottom: 0; pointer-events: none; }
.pick.a { width: 58px; margin-left: 4px; } .pick.b { width: 82px; margin-right: 6px; }
.syslist { flex: 1; min-height: 0; margin: 0 3px 0 1px; border-left: 1px solid #9aa3a9; border-top: 1px solid #777; overflow: hidden; }
.colhead { height: 16px; line-height: 16px; padding-left: 5px; font-size: 8px; border-bottom: 1px solid #aaa; background: #e8e8e8; }
.sys li { border-bottom: 1px solid #acadad; }
.hscroll { flex: none; height: 14px; display: flex; align-items: center; padding: 0 6px 0 4px; }
.hscroll .thumb { width: 98px; height: 12px; margin-left: 8px; background: linear-gradient(#dedede, #b2b2b2); }
.hscroll b { width: 6px; height: 5px; background: repeating-linear-gradient(90deg, #555 0 1px, transparent 1px 2px); }

.type { flex: none; height: 58px; margin: 1px 2px; border: 1px solid #cdcdcd; background: #dedede; justify-content: flex-start; text-align: left; }
.thumbnail { width: 50px; height: 54px; background: #ececec; padding: 1px 0; margin-left: 1px; flex: none; }
.tname { margin-left: 6px; flex: 1; white-space: nowrap; line-height: 13px; }
.type .dn { margin-right: 2px; }
.cat { flex: none; height: 18px; display: flex; align-items: center; justify-content: space-between; padding: 0 7px 0 3px; }
.cat .pick { width: 99px; }
.cat select { height: 17px; padding: 0 2px; }
.cat button { gap: 3px; white-space: nowrap; }
.proparea { flex: 1; min-height: 0; display: flex; overflow: hidden; margin-left: 2px; }
.tablewrap { width: 153px; overflow: hidden; }
table { width: 100%; table-layout: fixed; border-collapse: separate; border-spacing: 0; }
tr { height: 14px; }
tr:nth-child(3n) { height: 15px; }
th, td { padding: 0; font-weight: normal; text-align: left; line-height: 12px; white-space: nowrap; border-bottom: 1px solid #c3c4c3; vertical-align: middle; }
th[scope="row"] { padding-left: 8px; border-right: 1px solid #c3c4c3; }
td { padding-left: 3px; }
td.focus { outline: 1px solid #444; outline-offset: -1px; }
td input { appearance: none; width: 10px; height: 10px; border: 1px solid #999; background: #dce4ee; display: block; margin: 1px 0 0 2px; position: relative; }
td input:checked::after, .pd input:checked::after { content: ""; position: absolute; left: 3px; top: 0; width: 2px; height: 5px; border: solid #3a5f9a; border-width: 0 1px 1px 0; transform: rotate(40deg); }
.sec th { background: #c9caca; color: #333; padding-left: 3px; }
.sect { display: flex; justify-content: space-between; align-items: center; padding-right: 3px; }
.dim { color: #8f8f8f; }
.pscroll { width: 14px; display: flex; flex-direction: column; align-items: center; padding: 6px 1px 4px; }
.pscroll .thumb { width: 12px; flex: 0 1 348px; min-height: 0; margin-top: 4px; }
.pscroll b { width: 5px; height: 6px; background: repeating-linear-gradient(#666 0 1px, transparent 1px 2px); }
.foot { flex: none; height: 23px; display: flex; align-items: center; justify-content: space-between; padding: 0 4px 0 3px; }
.foot a { color: #2d66b0; text-decoration: underline; }
.foot button { width: 59px; height: 17px; border: 1px solid #b5b5b5; border-radius: 2px; color: #999; }

.status { flex: none; height: 19px; display: flex; align-items: center; background: linear-gradient(#cfcfcf, #b8b8b8); border-top: 1px solid #999; padding: 0 52px 0 2px; white-space: nowrap; }
.hint { width: 541px; }
.status .pick select { height: 15px; border: 0; border-radius: 0; background: #dcdcdc; color: #999; }
.status .pick::after { border-width: 3px 2px 0; border-top-color: #777; }
.ws { width: 161px; margin-left: 7px; }
.mm { width: 123px; margin-left: 5px; }
.gap { margin-left: 8px; }
.zero { width: 28px; padding-left: 3px; }
.zero + .ic { margin-right: 6px; }
.pd { display: flex; align-items: center; gap: 3px; margin-right: 11px; }
.pd input { appearance: none; width: 11px; height: 11px; border: 1px solid #555; background: #e8eee8; position: relative; }
.pd input:checked::after { left: 3px; top: 0; width: 3px; height: 6px; border-color: #3a9a3a; border-width: 0 2px 2px 0; }
.one { padding-left: 2px; }
</style>
